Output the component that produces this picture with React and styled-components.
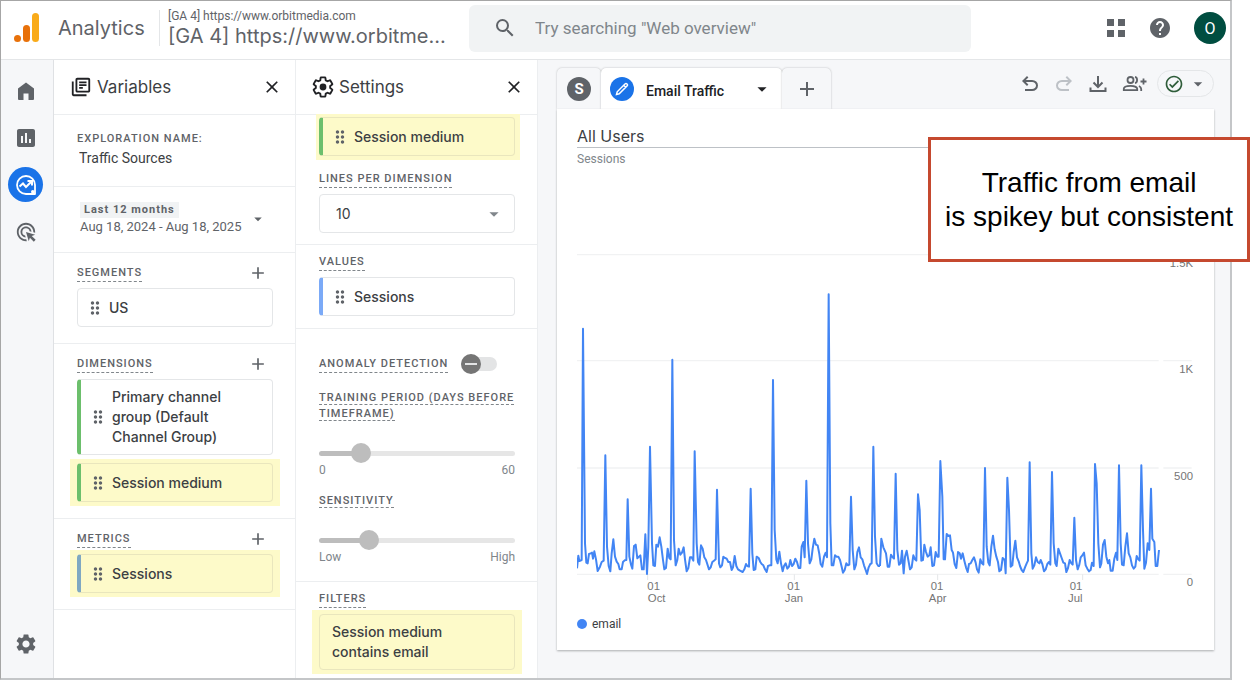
import { useState } from 'react'
import styled, { createGlobalStyle, css } from 'styled-components'
import {
  MdAdd,
  MdAdsClick,
  MdArrowDropDown,
  MdAssessment,
  MdClose,
  MdDragIndicator,
  MdHelp,
  MdOutlineCheckCircle,
  MdOutlineLibraryBooks,
  MdSearch,
  MdSettings,
} from 'react-icons/md'

const display = `Inter, 'Liberation Sans', sans-serif`

const GlobalStyle = createGlobalStyle`
  *, *::before, *::after {
    box-sizing: border-box;
  }

  body {
    margin: 0;
    background: #fff;
    color: #3c4043;
    font-family: Roboto, 'Liberation Sans', sans-serif;
  }

  button {
    margin: 0;
    padding: 0;
    border: 0;
    background: none;
    color: inherit;
    font: inherit;
    cursor: pointer;
  }

  svg {
    display: block;
    flex: none;
  }
`

const Page = styled.div`
  position: relative;
  min-height: 100vh;
  padding-right: 18px;
  display: flex;
`

const Frame = styled.div`
  flex: 1;
  min-width: 0;
  display: flex;
  flex-direction: column;
  border: 1px solid #a6a6a6;
  border-right: 2px solid #c4c6c8;
  border-bottom: 2px solid #c4c6c8;
`

/* header */

const Header = styled.header`
  display: flex;
  align-items: center;
  height: 59px;
  padding: 0 4px 4px 12px;
  border-bottom: 1px solid #e4e6e8;
  color: #5f6368;
`

const Brand = styled.a`
  display: flex;
  align-items: center;
  gap: 18px;
  width: 146px;
  color: inherit;
  font-family: ${display};
  font-size: 20px;
  text-decoration: none;
`

const Property = styled.button`
  width: 292px;
  height: 36px;
  padding-left: 8px;
  border-left: 1px solid #e4e6e8;
  text-align: left;
`

const PropertyAccount = styled.div`
  font-size: 12px;
  line-height: 12px;
`

const PropertyName = styled.div`
  font-family: ${display};
  font-size: 20px;
  line-height: 28px;
  white-space: nowrap;
`

const Search = styled.label`
  flex: 0 1 502px;
  display: flex;
  align-items: center;
  gap: 16px;
  height: 47px;
  margin-left: 18px;
  padding: 0 24px;
  border-radius: 6px;
  background: #f1f3f4;

  input {
    flex: 1;
    min-width: 0;
    border: 0;
    background: none;
    outline: 0;
    font: 17px Roboto, sans-serif;
  }

  input::placeholder {
    color: #80868b;
  }
`

const HeaderActions = styled.div`
  display: flex;
  align-items: center;
  gap: 22px;
  margin-left: auto;
`

const Avatar = styled.button`
  width: 32px;
  height: 32px;
  border-radius: 50%;
  background: #004d40;
  color: #fff;
  font-size: 16px;
`

/* navigation rail */

const Body = styled.div`
  flex: 1;
  display: flex;
`

const Rail = styled.nav`
  flex: none;
  display: flex;
  flex-direction: column;
  align-items: center;
  gap: 12px;
  width: 53px;
  padding: 13px 3px 17px 0;
  border-right: 1px solid #dfe1e4;
  background: #f6f7f9;
  color: #5f6368;
`

const RailLink = styled.a`
  display: flex;
  align-items: center;
  justify-content: center;
  width: 35px;
  height: 35px;
  border-radius: 50%;
  color: inherit;

  ${({ $active }) =>
    $active &&
    css`
      background: #1a73e8;
      color: #fff;
    `}

  &:last-child {
    margin-top: auto;
  }
`

/* side panels */

const Panel = styled.section`
  flex: none;
  width: 242px;
  border-right: 1px solid #eceef0;
`

const PanelHeader = styled.div`
  display: flex;
  align-items: center;
  gap: 5px;
  height: 55px;
  padding: 0 13px 0 16px;
  border-bottom: 1px solid #eceef0;
  color: #202124;

  h2 {
    flex: 1;
    margin: 0;
    color: #3c4043;
    font-family: ${display};
    font-size: 17px;
    font-weight: 400;
  }
`

const Section = styled.div`
  padding: ${({ $pad }) => $pad};
  border-bottom: ${({ $last }) => ($last ? 0 : '1px solid #eceef0')};
`

const Label = styled.span`
  color: #5f6368;
  font-size: 11px;
  font-weight: 500;
  line-height: 16px;
  letter-spacing: 1px;
  text-transform: uppercase;
  ${({ $dashed }) =>
    $dashed &&
    css`
      border-bottom: 1px dashed #80868b;
    `}
`

const LabelRow = styled.div`
  display: flex;
  align-items: center;
  justify-content: ${({ $start }) => ($start ? 'flex-start' : 'space-between')};
  gap: 13px;
  height: 20px;
  margin-bottom: 5px;
  padding-right: 5px;
  color: #5f6368;
`

const NameField = styled.label`
  display: flex;
  flex-direction: column;

  input {
    width: 100%;
    padding: 0 2px;
    border: 0;
    outline: 0;
    background: none;
    color: #3c4043;
    font: 14px/22px Roboto, sans-serif;
  }
`

const DateRange = styled.button`
  display: flex;
  align-items: center;
  justify-content: space-between;
  width: 100%;
  padding: 0 6px 0 3px;
  color: #5f6368;
  font-size: 13px;
  line-height: 18px;
  text-align: left;

  b {
    display: table;
    padding: 0 4px;
    background: #f1f3f4;
    font-size: 11px;
    font-weight: 700;
    line-height: 16px;
    letter-spacing: 1px;
  }
`

const stripes = {
  green: '#6cbf6c',
  blue: '#7baaf7',
  slate: '#7fa8c2',
}

const ChipList = styled.div`
  display: flex;
  flex-direction: column;
  gap: 8px;
`

const Chip = styled.button`
  display: flex;
  align-items: center;
  gap: 4px;
  width: 100%;
  min-height: 39px;
  padding: ${({ $stripe }) => ($stripe ? '7px 8px 7px 7px' : '7px')};
  border: 1px solid #e4e6e8;
  border-radius: 4px;
  color: #3c4043;
  font-family: ${display};
  font-size: 14px;
  font-weight: 500;
  line-height: 20px;
  text-align: left;

  svg {
    color: #5f6368;
  }

  ${({ $stripe }) =>
    $stripe &&
    css`
      border-left: 4px solid ${stripes[$stripe]};
    `}
`

const FilterChip = styled(Chip)`
  padding: 7px 12px;
`

const Highlight = styled.div`
  margin: -4px -7px;
  padding: 4px 7px;
  background: #fdfac9;

  ${Chip} {
    border-top-color: #e9e6bd;
    border-right-color: #e9e6bd;
    border-bottom-color: #e9e6bd;
  }

  ${FilterChip} {
    border-color: #e9e6bd;
  }
`

const PinnedHighlight = styled(Highlight)`
  position: relative;
  margin: -16px -5px 9px -3px;
  padding: 3px 5px 4px 3px;
`

const SelectBox = styled.div`
  display: flex;
  align-items: center;
  color: #80868b;

  select {
    flex: none;
    width: 100%;
    height: 39px;
    margin-right: -32px;
    padding: 0 16px;
    border: 1px solid #e4e6e8;
    border-radius: 4px;
    appearance: none;
    background: none;
    color: #3c4043;
    font: 14px ${display};
  }
`

const Toggle = styled.input`
  display: flex;
  align-items: center;
  width: 36px;
  height: 14px;
  margin: 0;
  border-radius: 7px;
  appearance: none;
  background: #e3e4e5;

  &::before {
    content: '';
    width: 20px;
    height: 20px;
    border-radius: 50%;
    background: linear-gradient(#e3e4e5, #e3e4e5) center / 12px 2px no-repeat #757575;
  }

  &:checked {
    justify-content: flex-end;
  }
`

const Range = styled.input`
  display: block;
  width: 100%;
  height: 20px;
  margin: 0;
  appearance: none;
  background: none;

  &::-webkit-slider-runnable-track {
    height: 5px;
    border-radius: 3px;
    background: linear-gradient(
      to right,
      #bdbdbd ${({ $fill }) => $fill}%,
      #e6e6e6 ${({ $fill }) => $fill}%
    );
  }

  &::-webkit-slider-thumb {
    width: 20px;
    height: 20px;
    margin-top: -8px;
    border-radius: 50%;
    appearance: none;
    background: #bdbdbd;
  }
`

const RangeEnds = styled.div`
  display: flex;
  justify-content: space-between;
  color: #80868b;
  font-size: 12px;
  line-height: 14px;
`

const SliderBlock = styled.div`
  margin-top: 16px;

  label {
    display: block;
    margin-bottom: 21px;
    font-size: 11px;
    line-height: 16px;
  }
`

/* workspace */

const Workspace = styled.main`
  flex: 1;
  min-width: 0;
  padding: 8px 16px 20px 19px;
  background: #f6f7f9;
`

const TopBar = styled.div`
  display: flex;
  align-items: flex-start;
  justify-content: space-between;
`

const Tabs = styled.div`
  display: flex;
`

const Tab = styled.div`
  display: flex;
  align-items: center;
  justify-content: center;
  gap: 12px;
  width: ${({ $width }) => $width}px;
  height: 41px;
  padding: 0 9px;
  border-radius: 5px 5px 0 0;
  background: ${({ $active }) => ($active ? '#fff' : '#f6f7f9')};
  box-shadow: 0 0 2px rgba(60, 64, 67, 0.35);
  color: #5f6368;
`

const TabBadge = styled.button`
  display: flex;
  align-items: center;
  justify-content: center;
  width: 24px;
  height: 24px;
  border-radius: 50%;
  background: ${({ $blue }) => ($blue ? '#1a73e8' : '#5f6368')};
  color: #fff;
  font-size: 15px;
  font-weight: 700;
`

const TabName = styled.button`
  flex: 1;
  display: flex;
  align-items: center;
  justify-content: space-between;
  padding-top: 4px;
  color: #202124;
  font-size: 14px;
  font-weight: 500;

  svg {
    margin-top: -4px;
  }
`

const Toolbar = styled.div`
  display: flex;
  align-items: center;
  gap: 14px;
  padding-top: 2px;
  color: #5f6368;

  button:disabled {
    color: #bdc1c6;
  }
`

const StatusPill = styled.button`
  display: flex;
  align-items: center;
  gap: 4px;
  height: 27px;
  margin-left: -4px;
  padding: 0 5px 0 6px;
  border: 1px solid #e4e6e8;
  border-radius: 14px;

  svg:first-child {
    color: #2f5d3a;
  }
`

const Card = styled.article`
  position: relative;
  padding: 17px 20px;
  background: #fff;
  box-shadow: 0 1px 2px rgba(60, 64, 67, 0.4);

  h3 {
    margin: 0;
    padding-bottom: 1px;
    border-bottom: 1px solid #bdc1c6;
    color: #3c4043;
    font-family: ${display};
    font-size: 16px;
    font-weight: 400;
    line-height: 20px;
  }
`

const Metric = styled.div`
  margin: 3px 0;
  color: #80868b;
  font-size: 12px;
  line-height: 16px;
`

const Chart = styled.svg`
  width: 100%;
  height: auto;

  text {
    fill: #757575;
    font: 34px 'Liberation Sans', sans-serif;
  }
`

const Legend = styled.div`
  display: flex;
  align-items: center;
  gap: 5px;
  margin-top: 5px;
  color: #3c4043;
  font-size: 12px;
  line-height: 18px;

  &::before {
    content: '';
    width: 10px;
    height: 10px;
    border-radius: 50%;
    background: #4285f4;
  }
`

const Callout = styled.aside`
  position: absolute;
  top: 137px;
  right: 0;
  padding: 26px 14px 25px;
  border: 3px solid #c5492f;
  background: #fff;
  color: #000;
  font: 28px/34px 'Liberation Sans', sans-serif;
  text-align: center;
`

/* icons */

const LogoIcon = () => (
  <svg width="27" height="30" viewBox="0 0 27 30">
    <circle cx="4.500" cy="25.500" r="3.500" fill="#e8710a" />
    <rect x="10" y="12" width="7" height="17" rx="3.500" fill="#e8710a" />
    <rect x="19" y="0" width="7" height="29" rx="3.500" fill="#f9ab1a" />
  </svg>
)

const AppsIcon = () => (
  <svg width="20" height="20" viewBox="0 0 20 20" fill="currentColor">
    <path d="M1 1h7v7H1zM12 1h7v7h-7zM1 12h7v7H1zM12 12h7v7h-7z" />
  </svg>
)

const HomeIcon = () => (
  <svg width="18" height="20" viewBox="0 0 18 20" fill="currentColor">
    <path d="M9 1.500 1 7.500V18a1 1 0 0 0 1 1h4.500v-6.500h5V19H16a1 1 0 0 0 1-1V7.500z" />
  </svg>
)

const ExploreIcon = () => (
  <svg width="22" height="22" viewBox="0 0 22 22" fill="none" stroke="currentColor">
    <path d="M20 11v9h-9a9 9 0 1 1 9-9z" strokeWidth="1.800" strokeLinejoin="round" />
    <path d="m4.500 12.500 3.500-3 3 3.500 5.500-5.500M12.500 7h4.500v4.500" strokeWidth="2" />
    <circle cx="17.800" cy="17.800" r="1.800" fill="currentColor" stroke="none" />
  </svg>
)

const GearIcon = () => (
  <svg width="22" height="22" viewBox="1 1 22 22">
    <path
      d="M19.140 12.940c.04-.3.06-.61.06-.94 0-.32-.02-.64-.07-.94l2.030-1.580c.18-.14.23-.41.12-.61l-1.920-3.320c-.12-.22-.37-.29-.59-.22l-2.390.96c-.5-.38-1.030-.7-1.620-.94l-.36-2.540c-.04-.24-.24-.41-.48-.41h-3.840c-.24 0-.43.17-.47.41l-.36 2.540c-.59.24-1.130.57-1.620.94l-2.390-.96c-.22-.08-.47 0-.59.22L2.740 8.870c-.12.21-.08.47.12.61l2.030 1.580c-.05.3-.09.63-.09.94s.02.64.07.94l-2.030 1.580c-.18.14-.23.41-.12.61l1.920 3.320c.12.22.37.29.59.22l2.390-.96c.5.38 1.030.7 1.620.94l.36 2.540c.05.24.24.41.48.41h3.840c.24 0 .44-.17.47-.41l.36-2.540c.59-.24 1.130-.56 1.620-.94l2.390.96c.22.08.47 0 .59-.22l1.920-3.320c.12-.22.07-.47-.12-.61z"
      fill="none"
      stroke="currentColor"
      strokeWidth="1.900"
    />
    <circle cx="12" cy="12" r="3.400" fill="currentColor" />
  </svg>
)

const PencilIcon = () => (
  <svg width="14" height="14" viewBox="0 0 14 14" fill="none" stroke="currentColor">
    <path d="M1.500 12.500 2.200 9.800 10 2a1.300 1.300 0 0 1 2 2l-7.800 7.800zM8.700 3.300l2 2" strokeWidth="1.500" />
  </svg>
)

const UndoIcon = ({ flip }) => (
  <svg
    width="20"
    height="20"
    viewBox="2 2 20 20"
    fill="currentColor"
    transform={flip ? 'scale(-1 1)' : undefined}
  >
    <path d="M7 19v-2h7.100q1.575 0 2.738-1T18 13.500 16.838 11 14.100 10H7.800l2.600 2.600L9 14 4 9l5-5 1.400 1.400L7.800 8h6.300q2.425 0 4.163 1.575T20 13.500t-1.737 3.925T14.100 19z" />
  </svg>
)

const DownloadIcon = () => (
  <svg width="20" height="20" viewBox="0 0 20 20" fill="none" stroke="currentColor" strokeWidth="2">
    <path d="M10 2v11M5.500 8.500 10 13l4.500-4.500M2.500 13.500V17h15v-3.500" />
  </svg>
)

const ShareIcon = () => (
  <svg width="25" height="20" viewBox="0 0 25 20" fill="none" stroke="currentColor" strokeWidth="1.800">
    <circle cx="8.500" cy="6" r="3" />
    <path d="M1.800 16.200v-1.400c0-2 3.500-3 6.700-3s6.700 1 6.700 3v1.400z" />
    <path d="M13 2.800c2.800.6 2.800 5.800 0 6.400M17 12c1.600.8 2.200 1.800 2.200 3v2M21.500 4.500v6M18.500 7.500h6" />
  </svg>
)

// Daily sessions, three units to a pixel, the zero line at 913
const firstHalf =
  '81,895 85,857 88,873 95,870 99,176 105,820 109,878 113,880 117,852 122,850 126,848 129,866 133,844 138,868 143,903 150,890 155,876 161,872 166,556 171,830 176,888 181,904 185,850 190,808 195,860 200,875 205,882 209,898 215,898 219,876 224,871 229,870 233,688 238,860 243,884 247,896 252,828 257,824 262,865 267,860 271,856 276,898 281,898 286,793 291,912 295,830 300,530 306,820 310,886 315,888 319,824 324,830 329,802 334,830 339,870 343,898 348,894 353,836 358,864 362,868 367,269 372,810 377,886 382,870 386,836 391,854 396,848 401,832 405,868 410,904 415,894 420,862 425,862 430,872 434,544 440,820 444,876 448,884 453,826 458,836 463,862 468,870 477,898 482,892 487,876 492,872 497,868 501,659 507,880 511,892 516,886 520,860 525,864 530,866 535,876 540,876 545,900 549,892 554,858 559,888 564,898 570,902 578,906 583,898 588,882 592,888 597,890 602,656 607,850 611,900 616,898 620,860 626,864 631,876 635,882 640,886 645,898 650,906 654,888 659,886 664,886 669,330 674,780 679,868 683,880 688,845 693,880 698,904 702,888 707,880 712,896 717,890 721,870 726,888 731,882 736,866 741,876 746,894 751,894 755,830 760,816 764,862 769,632 774,820 779,880 784,868 788,836 793,806 798,824 803,826 808,852 812,882 817,890 822,860 827,848 831,862 836,73 841,760 845,886 850,886 855,856 860,860 865,860 870,870 875,890 879,908 884,900 889,880 894,886 898,884 903,680 908,840 913,898 918,884 922,846 927,832 932,862 937,868 942,886 947,900 951,912 956,892 961,882 965,880 970,530 975,800 980,880 985,888 990,888'
const secondHalf =
  '0,888 4,806 10,832 18,850 23,890 28,890 33,854 38,862 42,866 47,611 52,840 57,884 62,880 66,842 71,910 75,860 80,842 85,870 90,898 95,892 100,856 105,868 109,872 114,673 119,720 124,872 129,870 133,824 138,846 143,860 148,856 152,832 157,888 162,886 167,846 172,860 176,860 181,573 187,680 191,868 195,868 200,792 205,798 210,796 215,840 219,848 224,882 229,894 234,846 239,850 243,866 248,850 253,872 258,892 263,906 267,882 272,880 277,870 282,862 287,878 291,898 296,908 301,868 306,880 310,884 315,594 320,830 325,878 329,886 334,830 339,797 344,838 349,860 354,876 358,904 363,900 368,864 374,870 377,910 382,623 387,720 392,890 397,886 401,846 406,812 411,862 416,874 420,888 425,900 430,906 435,892 440,880 444,872 449,577 454,850 458,896 463,886 468,862 473,876 478,880 482,870 487,882 492,904 497,898 502,882 507,876 511,884 516,606 521,820 526,880 530,888 535,836 540,850 545,864 550,878 555,880 559,906 564,894 569,870 574,880 578,884 583,743 588,870 593,898 598,884 602,862 607,856 612,848 617,886 622,896 627,904 632,900 636,878 641,888 645,582 650,640 655,820 660,892 664,880 669,824 674,810 679,860 684,880 688,870 692,902 698,902 703,866 708,848 712,870 717,586 722,820 726,884 731,886 736,830 741,790 746,850 751,862 756,886 761,896 766,890 770,858 775,868 779,872 784,586 789,780 793,896 798,878 803,820 808,840 813,656 817,806 823,816 827,888 832,888 837,840'

const gridLines = [
  { y: -46, label: '1.5K' },
  { y: 272, label: '1K' },
  { y: 594, label: '500' },
  { y: 913, label: '0' },
]

const months = [
  { tick: 293, day: 311, x: 320, name: 'Oct' },
  { tick: 733, day: 731, x: 732, name: 'Jan' },
  { tick: 1163, day: 1161, x: 1163, name: 'Apr' },
  { tick: 1598, day: 1578, x: 1576, name: 'Jul' },
]

function SessionsChart() {
  return (
    <Chart viewBox="81 -300 1851 1320" role="img" aria-label="Email sessions by day">
      {gridLines.map(({ y, label }) => (
        <g key={label}>
          <path d={`M81 ${y}H1826M1840 ${y}H1925`} stroke="#f1f2f3" strokeWidth="4" />
          <text x="1929" y={y + 36} textAnchor="end">
            {label}
          </text>
        </g>
      ))}
      {months.map(({ tick, day, x, name }) => (
        <g key={name}>
          <path d={`M${tick} 913v17`} stroke="#e4e6e8" strokeWidth="3" />
          <text x={day} y="960" textAnchor="middle">
            01
          </text>
          <text x={x} y="995" textAnchor="middle">
            {name}
          </text>
        </g>
      ))}
      <g fill="none" stroke="#4285f4" strokeWidth="6" strokeLinejoin="round">
        <polyline points={firstHalf} />
        <polyline points={secondHalf} transform="translate(990 0)" />
      </g>
    </Chart>
  )
}

function Slider({ id, label, max, start, ends }) {
  const [value, setValue] = useState(start)

  return (
    <SliderBlock>
      <label htmlFor={id}>
        <Label $dashed>{label}</Label>
      </label>
      <Range
        id={id}
        type="range"
        min={0}
        max={max}
        value={value}
        $fill={(value / max) * 100}
        onChange={(e) => setValue(Number(e.target.value))}
      />
      <RangeEnds>
        <span>{ends[0]}</span>
        <span>{ends[1]}</span>
      </RangeEnds>
    </SliderBlock>
  )
}

function Field({ stripe, children }) {
  return (
    <Chip $stripe={stripe}>
      <MdDragIndicator size={20} />
      {children}
    </Chip>
  )
}

function SectionTitle({ children }) {
  return (
    <LabelRow>
      <Label $dashed>{children}</Label>
      <button aria-label={`Add ${children}`}>
        <MdAdd size={20} />
      </button>
    </LabelRow>
  )
}

function VariablesPanel() {
  return (
    <Panel>
      <PanelHeader>
        <MdOutlineLibraryBooks size={22} />
        <h2>Variables</h2>
        <button aria-label="Close variables">
          <MdClose size={20} />
        </button>
      </PanelHeader>
      <Section $pad="16px 22px 17px 23px">
        <NameField>
          <Label>Exploration name:</Label>
          <input defaultValue="Traffic Sources" />
        </NameField>
      </Section>
      <Section $pad="15px 22px 16px 23px">
        <DateRange>
          <span>
            <b>Last 12 months</b>
            Aug 18, 2024 - Aug 18, 2025
          </span>
          <MdArrowDropDown size={18} />
        </DateRange>
      </Section>
      <Section $pad="10px 22px 16px 23px">
        <SectionTitle>Segments</SectionTitle>
        <Field>US</Field>
      </Section>
      <Section $pad="10px 22px 16px 23px">
        <SectionTitle>Dimensions</SectionTitle>
        <ChipList>
          <Field stripe="green">Primary channel group (Default Channel Group)</Field>
          <Highlight>
            <Field stripe="green">Session medium</Field>
          </Highlight>
        </ChipList>
      </Section>
      <Section $pad="10px 22px 16px 23px">
        <SectionTitle>Metrics</SectionTitle>
        <ChipList>
          <Highlight>
            <Field stripe="slate">Sessions</Field>
          </Highlight>
        </ChipList>
      </Section>
    </Panel>
  )
}

function SettingsPanel() {
  return (
    <Panel>
      <PanelHeader>
        <GearIcon />
        <h2>Settings</h2>
        <button aria-label="Close settings">
          <MdClose size={20} />
        </button>
      </PanelHeader>
      <Section $pad="15px 22px 11px 23px">
        <PinnedHighlight>
          <Field stripe="green">Session medium</Field>
        </PinnedHighlight>
        <LabelRow as="label" htmlFor="lines">
          <Label $dashed>Lines per dimension</Label>
        </LabelRow>
        <SelectBox>
          <select id="lines" defaultValue="10">
            <option>5</option>
            <option>10</option>
          </select>
          <MdArrowDropDown size={22} />
        </SelectBox>
      </Section>
      <Section $pad="7px 22px 12px 23px">
        <LabelRow>
          <Label $dashed>Values</Label>
        </LabelRow>
        <Field stripe="blue">Sessions</Field>
      </Section>
      <Section $pad="25px 22px 17px 23px">
        <LabelRow as="label" $start>
          <Label $dashed>Anomaly detection</Label>
          <Toggle type="checkbox" />
        </LabelRow>
        <Slider id="training" label="Training period (days before timeframe)" max={60} start={11} ends={['0', '60']} />
        <Slider id="sensitivity" label="Sensitivity" max={100} start={23} ends={['Low', 'High']} />
      </Section>
      <Section $pad="7px 22px 6px 23px" $last>
        <LabelRow>
          <Label $dashed>Filters</Label>
        </LabelRow>
        <ChipList>
          <Highlight>
            <FilterChip>
              Session medium
              <br />
              contains email
            </FilterChip>
          </Highlight>
        </ChipList>
      </Section>
    </Panel>
  )
}

export default function App() {
  return (
    <>
      <GlobalStyle />
      <Page>
        <Frame>
          <Header>
            <Brand href="#home">
              <LogoIcon />
              Analytics
            </Brand>
            <Property>
              <PropertyAccount>[GA 4] https://www.orbitmedia.com</PropertyAccount>
              <PropertyName>[GA 4] https://www.orbitme...</PropertyName>
            </Property>
            <Search>
              <MdSearch size={24} />
              <input aria-label="Search" placeholder={'Try searching "Web overview"'} />
            </Search>
            <HeaderActions>
              <button aria-label="Apps">
                <AppsIcon />
              </button>
              <button aria-label="Help">
                <MdHelp size={24} />
              </button>
              <Avatar>O</Avatar>
            </HeaderActions>
          </Header>
          <Body>
            <Rail>
              <RailLink href="#home" aria-label="Home">
                <HomeIcon />
              </RailLink>
              <RailLink href="#reports" aria-label="Reports">
                <MdAssessment size={24} />
              </RailLink>
              <RailLink href="#explore" aria-label="Explore" $active>
                <ExploreIcon />
              </RailLink>
              <RailLink href="#advertising" aria-label="Advertising">
                <MdAdsClick size={22} />
              </RailLink>
              <RailLink href="#admin" aria-label="Admin">
                <MdSettings size={24} />
              </RailLink>
            </Rail>
            <VariablesPanel />
            <SettingsPanel />
            <Workspace>
              <TopBar>
                <Tabs>
                  <Tab $width={44}>
                    <TabBadge>S</TabBadge>
                  </Tab>
                  <Tab $width={181} $active>
                    <TabBadge $blue aria-label="Edit">
                      <PencilIcon />
                    </TabBadge>
                    <TabName>
                      Email Traffic
                      <MdArrowDropDown size={22} />
                    </TabName>
                  </Tab>
                  <Tab as="button" $width={49} aria-label="Add tab">
                    <MdAdd size={24} />
                  </Tab>
                </Tabs>
                <Toolbar>
                  <button aria-label="Undo">
                    <UndoIcon />
                  </button>
                  <button aria-label="Redo" disabled>
                    <UndoIcon flip />
                  </button>
                  <button aria-label="Download">
                    <DownloadIcon />
                  </button>
                  <button aria-label="Share">
                    <ShareIcon />
                  </button>
                  <StatusPill aria-label="Data quality">
                    <MdOutlineCheckCircle size={20} />
                    <MdArrowDropDown size={20} />
                  </StatusPill>
                </Toolbar>
              </TopBar>
              <Card>
                <h3>All Users</h3>
                <Metric>Sessions</Metric>
                <SessionsChart />
                <Legend>email</Legend>
              </Card>
            </Workspace>
          </Body>
        </Frame>
        <Callout>
          Traffic from email
          <br />
          is spikey but consistent
        </Callout>
      </Page>
    </>
  )
}
